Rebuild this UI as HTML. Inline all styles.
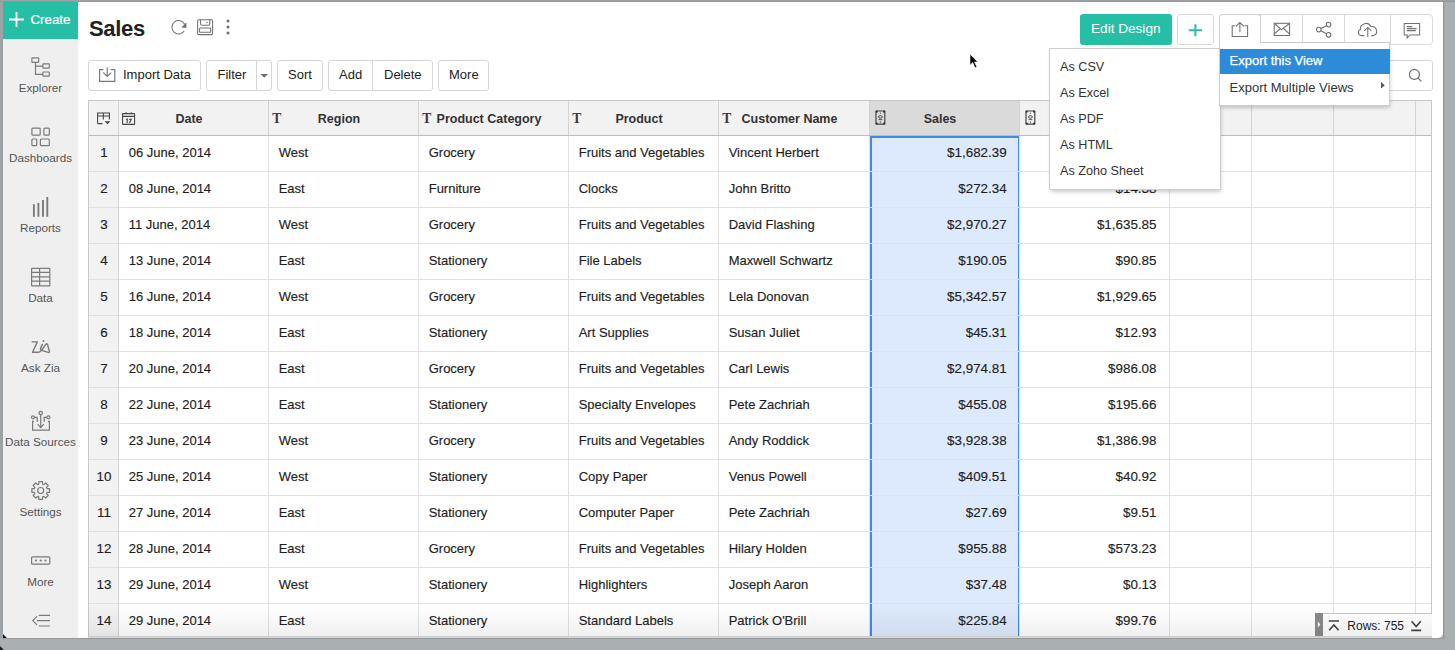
<!DOCTYPE html><html><head><meta charset="utf-8"><style>
*{box-sizing:border-box;margin:0;padding:0}
html,body{width:1455px;height:650px;overflow:hidden;background:#aab0b2;font-family:"Liberation Sans",sans-serif;color:#333}
#win{position:absolute;left:3px;top:2px;width:1440px;height:636px;background:#fff;border-radius:0 0 5px 5px;overflow:hidden}
#o{position:absolute;left:-3px;top:-2px;width:1455px;height:650px}
.a{position:absolute}
.t{position:absolute;white-space:nowrap;line-height:1}
svg{position:absolute;overflow:visible}
.side{left:3px;top:2px;width:75px;height:636px;background:#efefef}
.create{left:3px;top:2px;width:75px;height:37px;background:#26bfa6}
.sl{position:absolute;left:3px;width:75px;text-align:center;font-size:11.7px;color:#555;line-height:1}
.btn{position:absolute;top:60px;height:31px;border:1px solid #d6d6d6;border-radius:3px;background:#fff}
.bt{position:absolute;top:68px;font-size:13px;color:#222;white-space:nowrap;line-height:1}
.cell{position:absolute;font-size:13px;color:#1e1e1e;white-space:nowrap;line-height:1;-webkit-text-stroke:0.15px #1e1e1e}
.num{font-size:13.4px}
.hd{position:absolute;font-size:12.5px;font-weight:bold;color:#333;white-space:nowrap;line-height:1;text-align:center}
.mi{position:absolute;font-size:13px;color:#333;white-space:nowrap;line-height:1}
</style></head><body>
<div class="a" style="left:0;top:0;width:3px;height:638px;background:#9ea2a5"></div>
<div class="a" style="left:0;top:0;width:1455px;height:1px;background:#9ea2a5"></div>
<div class="a" style="left:0;top:1px;width:1455px;height:1px;background:#94979a"></div>
<div class="a" style="left:1443px;top:2px;width:1px;height:637px;background:#96999c"></div>
<div class="a" style="left:1444px;top:2px;width:1px;height:637px;background:#9ea2a4"></div>
<div class="a" style="left:3px;top:638px;width:1441px;height:1px;background:#95999b"></div>
<div id="win"><div id="o">
<div class="a side"></div>
<div class="a create"></div>
<svg width="1455" height="650" style="left:0;top:0"><path d="M16.5 12V27M9 19.5H24" stroke="#fff" stroke-width="1.8" fill="none"/></svg>
<div class="t" style="left:30.5px;top:12.8px;font-size:13.3px;color:#fff;-webkit-text-stroke:0.2px #fff">Create</div>
<svg width="1455" height="650" style="left:0;top:0" fill="none" stroke="#7a7a7a" stroke-width="1.2">
<!-- explorer -->
<rect x="31.9" y="57.9" width="6.8" height="4.4" rx="0.6"/>
<path d="M35.5 62.3V74.3H42.9M35.5 66.2H42.9"/>
<rect x="42.9" y="63.9" width="6.4" height="4.2" rx="0.6"/>
<rect x="42.9" y="72" width="6.4" height="4.2" rx="0.6"/>
<!-- dashboards -->
<rect x="31.9" y="128.1" width="8.3" height="7" rx="0.9"/>
<rect x="43.9" y="128.1" width="5.4" height="7" rx="0.9"/>
<rect x="31.9" y="139" width="4.8" height="6.6" rx="0.9"/>
<rect x="40.4" y="139" width="8.9" height="6.6" rx="0.9"/>
<!-- reports -->
<path d="M33.9 204.2V216.8M38.4 203.1V216.8M43 200.1V216.8M47.3 197.1V216.8" stroke-width="1.9"/>
<!-- data -->
<rect x="31.6" y="268.4" width="18.2" height="17.4" rx="0.4"/>
<path d="M31.6 272.4H49.8M31.6 276.8H49.8M31.6 281.2H49.8M39.6 268.4V285.8"/>
<!-- zia -->
<path d="M32.2 341.9H37.4L32.5 352.3H38.6Q40 352.3 40.6 351.2M42.4 344.4L40.5 348.6Q40.1 350 41.6 350.3L48.2 352.4Q49.8 352.8 49.4 351.2L47.6 344.8Q46.9 343 45.8 344.4L41.8 350" stroke-width="1.4" stroke-linejoin="round" stroke-linecap="round"/>
<circle cx="43.5" cy="340.9" r="1" fill="#7a7a7a" stroke="none"/>
<!-- data sources -->
<path d="M34 421.4H32.6V430.2H49.4V421.4H48"/>
<circle cx="40.7" cy="413" r="1.7"/>
<path d="M40.7 414.7V427.6M37.6 424.2L40.7 427.6L43.8 424.2"/>
<circle cx="33" cy="417.3" r="1.5"/>
<circle cx="48.4" cy="417.3" r="1.5"/>
<path d="M34.5 417.3H37.2V420.2M46.9 417.3H44.2V420.2"/>
<circle cx="37.2" cy="420.8" r="0.9" fill="#7a7a7a" stroke="none"/>
<circle cx="44.2" cy="420.8" r="0.9" fill="#7a7a7a" stroke="none"/>
<!-- settings gear -->
<path id="gear" d="M38.75 484.19 L38.91 481.68 L42.49 481.68 L42.65 484.19 L43.78 484.66 L45.67 483.00 L48.20 485.53 L46.54 487.42 L47.01 488.55 L49.52 488.71 L49.52 492.29 L47.01 492.45 L46.54 493.58 L48.20 495.47 L45.67 498.00 L43.78 496.34 L42.65 496.81 L42.49 499.32 L38.91 499.32 L38.75 496.81 L37.62 496.34 L35.73 498.00 L33.20 495.47 L34.86 493.58 L34.39 492.45 L31.88 492.29 L31.88 488.71 L34.39 488.55 L34.86 487.42 L33.20 485.53 L35.73 483.00 L37.62 484.66Z" stroke-linejoin="round"/>
<circle cx="40.7" cy="490.5" r="3"/>
<!-- more -->
<rect x="31.6" y="556.8" width="18.2" height="7.4" rx="1"/>
<circle cx="36" cy="560.5" r="1.1" fill="#7a7a7a" stroke="none"/>
<circle cx="40.7" cy="560.5" r="1.1" fill="#7a7a7a" stroke="none"/>
<circle cx="45.4" cy="560.5" r="1.1" fill="#7a7a7a" stroke="none"/>
<!-- collapse -->
<path d="M38.8 615.3H50M36.8 620.6H50M38.8 626H50M37 616.4L32.8 620.6L37 624.8"/>
</svg>
<div class="sl" style="top:82.15px">Explorer</div>
<div class="sl" style="top:152.15px">Dashboards</div>
<div class="sl" style="top:222.15px">Reports</div>
<div class="sl" style="top:292.15px">Data</div>
<div class="sl" style="top:362.15px">Ask Zia</div>
<div class="sl" style="top:436.15px">Data Sources</div>
<div class="sl" style="top:506.15px">Settings</div>
<div class="sl" style="top:576.15px">More</div>
<div class="t" style="left:89px;top:18px;font-size:22px;font-weight:bold;color:#222;letter-spacing:-0.3px">Sales</div>
<svg width="1455" height="650" style="left:0;top:0" fill="none" stroke="#707070" stroke-width="1.05">
<path d="M184.6 24.2A6.7 6.7 0 1 0 184.2 31"/>
<path d="M182 27.3L186 23L186.2 27.6Z" fill="#6e6e6e" stroke-width="0.6"/>
<rect x="197.6" y="19.8" width="15" height="14.8" rx="1.2"/>
<path d="M200.6 19.8V24Q200.6 25.3 201.9 25.3H208.5Q209.8 25.3 209.8 24V19.8"/>
<rect x="199.4" y="28" width="11.4" height="4.2" rx="1"/>
<circle cx="207" cy="22.5" r="0.7" fill="#6e6e6e" stroke="none"/>
<circle cx="228" cy="21" r="1.5" fill="#6e6e6e" stroke="none"/>
<circle cx="228" cy="27" r="1.5" fill="#6e6e6e" stroke="none"/>
<circle cx="228" cy="33" r="1.5" fill="#6e6e6e" stroke="none"/>
</svg>
<div class="a" style="left:1080px;top:14px;width:92px;height:31px;background:#26bfa6;border-radius:3px"></div>
<div class="t" style="left:1091px;top:21.5px;font-size:13.6px;color:#fff">Edit Design</div>
<div class="a" style="left:1177px;top:14px;width:37px;height:31px;border:1px solid #d9d9d9;border-radius:3px;background:#fff"></div>
<svg width="1455" height="650" style="left:0;top:0"><path d="M1195.4 24.2V36.2M1188.8 30.2H1202" stroke="#26bfa6" stroke-width="2" fill="none"/></svg>
<div class="a" style="left:1219px;top:14px;width:214px;height:31px;border:1px solid #d9d9d9;border-radius:4px;background:#fff"></div>
<div class="a" style="left:1260px;top:14px;width:1px;height:30px;background:#d9d9d9"></div>
<div class="a" style="left:1302px;top:14px;width:1px;height:30px;background:#d9d9d9"></div>
<div class="a" style="left:1344px;top:14px;width:1px;height:30px;background:#d9d9d9"></div>
<div class="a" style="left:1390px;top:14px;width:1px;height:30px;background:#d9d9d9"></div>
<div class="a" style="left:1219px;top:14px;width:42px;height:31px;border:1px solid #d0d0d0;border-bottom:none;border-radius:4px 4px 0 0;background:#fff"></div>
<svg width="1455" height="650" style="left:0;top:0" fill="none" stroke="#707070" stroke-width="1.05">
<path d="M1235.3 25.8H1232.2V36.4H1247.6V25.8H1244.5"/>
<path d="M1239.9 22.5V32.3M1236 26.3L1239.9 22.4L1243.8 26.3"/>
<rect x="1274.2" y="23.3" width="15.4" height="12.2"/>
<path d="M1274.4 23.5L1281.5 29.6L1289.4 23.5M1274.4 33.9L1280.3 28.5M1289.4 33.9L1283.6 28.5"/>
<circle cx="1318.8" cy="29.6" r="2.3"/>
<circle cx="1328.6" cy="24.6" r="2.3"/>
<circle cx="1328.6" cy="34.8" r="2.3"/>
<path d="M1320.9 28.5L1326.5 25.7M1320.9 30.7L1326.5 33.7"/>
<path d="M1364.4 35.6H1361.4A3.1 3.1 0 0 1 1360.4 29.6A5.6 5.6 0 0 1 1371 26.6A4.7 4.7 0 0 1 1373.6 35.6H1371.2"/>
<path d="M1367.8 27.5V37M1364.2 31L1367.8 27.4L1371.4 31"/>
<path d="M1404.2 23.4H1419.6V35H1410L1407.2 38V35H1404.2Z"/>
<path d="M1406.8 26.6H1412.2M1406.8 28.6H1416.6M1406.8 30.6H1415.8"/>
</svg>
<div class="btn" style="left:88px;width:113px"></div>
<svg width="1455" height="650" style="left:0;top:0" fill="none" stroke="#7a7a7a" stroke-width="1.2">
<path d="M103.4 69.6H99.6V81.4H114.8V69.6H110.8M107.2 67.4V76.2M103.2 72.6L107.2 76.4L111.2 72.6"/>
</svg>
<div class="bt" style="left:123px">Import Data</div>
<div class="btn" style="left:206px;width:66px"></div>
<div class="a" style="left:255.5px;top:61px;width:1px;height:29px;background:#d6d6d6"></div>
<div class="bt" style="left:217.5px">Filter</div>
<svg width="1455" height="650" style="left:0;top:0"><path d="M260.4 74L268 74L264.2 77.8Z" fill="#6e6e6e"/></svg>
<div class="btn" style="left:277px;width:46px"></div>
<div class="bt" style="left:288px">Sort</div>
<div class="btn" style="left:328px;width:104.5px"></div>
<div class="a" style="left:372px;top:61px;width:1px;height:29px;background:#d6d6d6"></div>
<div class="bt" style="left:339px">Add</div>
<div class="bt" style="left:384px">Delete</div>
<div class="btn" style="left:438px;width:50.5px"></div>
<div class="bt" style="left:449px">More</div>
<div class="btn" style="left:1380px;top:60px;width:53px;height:31px"></div>
<svg width="1455" height="650" style="left:0;top:0" fill="none" stroke="#6e6e6e" stroke-width="1.2"><circle cx="1414.4" cy="74.4" r="5"/><path d="M1418 78L1421.4 81.4"/></svg>
<div class="a" style="left:88px;top:100px;width:1344px;height:536px;border:1px solid #c8c8c8;border-bottom:none;background:#fff"></div>
<div class="a" style="left:89px;top:101px;width:1342px;height:34px;background:#f2f2f2"></div>
<div class="a" style="left:869px;top:101px;width:150px;height:34px;background:#dadada"></div>
<div class="a" style="left:89px;top:135px;width:29px;height:501px;background:#f2f2f2"></div>
<div class="a" style="left:870px;top:136px;width:150px;height:500px;background:#dde9fc;border:2px solid #418ae6;border-bottom:none"></div>
<div class="a" style="left:89px;top:171px;width:1342px;height:1px;background:#e2e2e2"></div>
<div class="a" style="left:89px;top:207px;width:1342px;height:1px;background:#e2e2e2"></div>
<div class="a" style="left:89px;top:243px;width:1342px;height:1px;background:#e2e2e2"></div>
<div class="a" style="left:89px;top:279px;width:1342px;height:1px;background:#e2e2e2"></div>
<div class="a" style="left:89px;top:315px;width:1342px;height:1px;background:#e2e2e2"></div>
<div class="a" style="left:89px;top:351px;width:1342px;height:1px;background:#e2e2e2"></div>
<div class="a" style="left:89px;top:387px;width:1342px;height:1px;background:#e2e2e2"></div>
<div class="a" style="left:89px;top:423px;width:1342px;height:1px;background:#e2e2e2"></div>
<div class="a" style="left:89px;top:459px;width:1342px;height:1px;background:#e2e2e2"></div>
<div class="a" style="left:89px;top:495px;width:1342px;height:1px;background:#e2e2e2"></div>
<div class="a" style="left:89px;top:531px;width:1342px;height:1px;background:#e2e2e2"></div>
<div class="a" style="left:89px;top:567px;width:1342px;height:1px;background:#e2e2e2"></div>
<div class="a" style="left:89px;top:603px;width:1342px;height:1px;background:#e2e2e2"></div>
<div class="a" style="left:89px;top:639px;width:1342px;height:1px;background:#e2e2e2"></div>
<div class="a" style="left:89px;top:135px;width:1342px;height:1px;background:#bdbdbd"></div>
<div class="a" style="left:118px;top:101px;width:1px;height:34px;background:#d4d4d4"></div>
<div class="a" style="left:118px;top:136px;width:1px;height:500px;background:#e2e2e2"></div>
<div class="a" style="left:268px;top:101px;width:1px;height:34px;background:#d4d4d4"></div>
<div class="a" style="left:268px;top:136px;width:1px;height:500px;background:#e2e2e2"></div>
<div class="a" style="left:418px;top:101px;width:1px;height:34px;background:#d4d4d4"></div>
<div class="a" style="left:418px;top:136px;width:1px;height:500px;background:#e2e2e2"></div>
<div class="a" style="left:568px;top:101px;width:1px;height:34px;background:#d4d4d4"></div>
<div class="a" style="left:568px;top:136px;width:1px;height:500px;background:#e2e2e2"></div>
<div class="a" style="left:718px;top:101px;width:1px;height:34px;background:#d4d4d4"></div>
<div class="a" style="left:718px;top:136px;width:1px;height:500px;background:#e2e2e2"></div>
<div class="a" style="left:869px;top:101px;width:1px;height:34px;background:#d4d4d4"></div>
<div class="a" style="left:869px;top:136px;width:1px;height:500px;background:#e2e2e2"></div>
<div class="a" style="left:1019px;top:101px;width:1px;height:34px;background:#d4d4d4"></div>
<div class="a" style="left:1019px;top:136px;width:1px;height:500px;background:#e2e2e2"></div>
<div class="a" style="left:1169px;top:101px;width:1px;height:34px;background:#d4d4d4"></div>
<div class="a" style="left:1169px;top:136px;width:1px;height:500px;background:#e2e2e2"></div>
<div class="a" style="left:1251px;top:101px;width:1px;height:34px;background:#d4d4d4"></div>
<div class="a" style="left:1251px;top:136px;width:1px;height:500px;background:#e2e2e2"></div>
<div class="a" style="left:1333px;top:101px;width:1px;height:34px;background:#d4d4d4"></div>
<div class="a" style="left:1333px;top:136px;width:1px;height:500px;background:#e2e2e2"></div>
<div class="a" style="left:1415px;top:101px;width:1px;height:34px;background:#d4d4d4"></div>
<div class="a" style="left:1415px;top:136px;width:1px;height:500px;background:#e2e2e2"></div>
<div class="a" style="left:118px;top:136px;width:1px;height:500px;background:#d4d4d4"></div>
<div class="hd" style="left:109.0px;width:160px;top:112.8px">Date</div>
<div class="hd" style="left:259.0px;width:160px;top:112.8px">Region</div>
<div class="hd" style="left:409.0px;width:160px;top:112.8px">Product Category</div>
<div class="hd" style="left:559.0px;width:160px;top:112.8px">Product</div>
<div class="hd" style="left:709.5px;width:160px;top:112.8px">Customer Name</div>
<div class="hd" style="left:860.0px;width:160px;top:112.8px">Sales</div>
<svg width="1455" height="650" style="left:0;top:0" fill="none" stroke="#444" stroke-width="1.1"><path d="M97.6 123.6V113H109.4V119.5M97.6 116H109.4M103.3 113V119.5M97.6 123.6H102.5" /><path d="M104.6 121.2H110.4L107.5 124.2Z" fill="#444" stroke="none"/><rect x="122.6" y="113.6" width="12" height="10.8" rx="0.4"/><path d="M122.6 116.4H134.6M126 112.2V114M131.2 112.2V114"/><path d="M126.2 119.8L127.2 119.1V122.9M128.9 119.3H131.3L129.4 122.9" stroke-width="1.1"/><text x="272.3" y="123" font-size="13.6" font-weight="bold" fill="#3a3a3a" stroke="none" font-family="Liberation Serif">T</text><text x="422.3" y="123" font-size="13.6" font-weight="bold" fill="#3a3a3a" stroke="none" font-family="Liberation Serif">T</text><text x="572.3" y="123" font-size="13.6" font-weight="bold" fill="#3a3a3a" stroke="none" font-family="Liberation Serif">T</text><text x="722.3" y="123" font-size="13.6" font-weight="bold" fill="#3a3a3a" stroke="none" font-family="Liberation Serif">T</text><rect x="876" y="111" width="8.8" height="13.2" rx="0.5" stroke-width="1.2"/><circle cx="876.7" cy="111.7" r="1.1" fill="#333" stroke="none"/><circle cx="884.1" cy="111.7" r="1.1" fill="#333" stroke="none"/><circle cx="876.7" cy="123.5" r="1.1" fill="#333" stroke="none"/><circle cx="884.1" cy="123.5" r="1.1" fill="#333" stroke="none"/><ellipse cx="880.4" cy="116.9" rx="1.9" ry="1.3" stroke-width="0.9"/><path d="M880.4 112.6V113.8M880.4 121.4V122.8M878.6 119.6H882.2" stroke-width="0.9"/><rect x="1026" y="111" width="8.8" height="13.2" rx="0.5" stroke-width="1.2"/><circle cx="1026.7" cy="111.7" r="1.1" fill="#333" stroke="none"/><circle cx="1034.1" cy="111.7" r="1.1" fill="#333" stroke="none"/><circle cx="1026.7" cy="123.5" r="1.1" fill="#333" stroke="none"/><circle cx="1034.1" cy="123.5" r="1.1" fill="#333" stroke="none"/><ellipse cx="1030.4" cy="116.9" rx="1.9" ry="1.3" stroke-width="0.9"/><path d="M1030.4 112.6V113.8M1030.4 121.4V122.8M1028.6 119.6H1032.2" stroke-width="0.9"/></svg>
<div class="cell num" style="left:89px;width:30px;text-align:center;top:145.7px">1</div>
<div class="cell" style="left:128.7px;top:145.5px">06 June, 2014</div>
<div class="cell" style="left:278.7px;top:145.5px">West</div>
<div class="cell" style="left:428.7px;top:145.5px">Grocery</div>
<div class="cell" style="left:578.7px;top:145.5px">Fruits and Vegetables</div>
<div class="cell" style="left:728.7px;top:145.5px">Vincent Herbert</div>
<div class="cell num" style="left:869px;width:137.7px;text-align:right;top:145.9px">$1,682.39</div>
<div class="cell num" style="left:89px;width:30px;text-align:center;top:181.7px">2</div>
<div class="cell" style="left:128.7px;top:181.5px">08 June, 2014</div>
<div class="cell" style="left:278.7px;top:181.5px">East</div>
<div class="cell" style="left:428.7px;top:181.5px">Furniture</div>
<div class="cell" style="left:578.7px;top:181.5px">Clocks</div>
<div class="cell" style="left:728.7px;top:181.5px">John Britto</div>
<div class="cell num" style="left:869px;width:137.7px;text-align:right;top:181.9px">$272.34</div>
<div class="cell num" style="left:1019px;width:137.5px;text-align:right;top:181.9px">$14.38</div>
<div class="cell num" style="left:89px;width:30px;text-align:center;top:217.7px">3</div>
<div class="cell" style="left:128.7px;top:217.5px">11 June, 2014</div>
<div class="cell" style="left:278.7px;top:217.5px">West</div>
<div class="cell" style="left:428.7px;top:217.5px">Grocery</div>
<div class="cell" style="left:578.7px;top:217.5px">Fruits and Vegetables</div>
<div class="cell" style="left:728.7px;top:217.5px">David Flashing</div>
<div class="cell num" style="left:869px;width:137.7px;text-align:right;top:217.9px">$2,970.27</div>
<div class="cell num" style="left:1019px;width:137.5px;text-align:right;top:217.9px">$1,635.85</div>
<div class="cell num" style="left:89px;width:30px;text-align:center;top:253.7px">4</div>
<div class="cell" style="left:128.7px;top:253.5px">13 June, 2014</div>
<div class="cell" style="left:278.7px;top:253.5px">East</div>
<div class="cell" style="left:428.7px;top:253.5px">Stationery</div>
<div class="cell" style="left:578.7px;top:253.5px">File Labels</div>
<div class="cell" style="left:728.7px;top:253.5px">Maxwell Schwartz</div>
<div class="cell num" style="left:869px;width:137.7px;text-align:right;top:253.9px">$190.05</div>
<div class="cell num" style="left:1019px;width:137.5px;text-align:right;top:253.9px">$90.85</div>
<div class="cell num" style="left:89px;width:30px;text-align:center;top:289.7px">5</div>
<div class="cell" style="left:128.7px;top:289.5px">16 June, 2014</div>
<div class="cell" style="left:278.7px;top:289.5px">West</div>
<div class="cell" style="left:428.7px;top:289.5px">Grocery</div>
<div class="cell" style="left:578.7px;top:289.5px">Fruits and Vegetables</div>
<div class="cell" style="left:728.7px;top:289.5px">Lela Donovan</div>
<div class="cell num" style="left:869px;width:137.7px;text-align:right;top:289.9px">$5,342.57</div>
<div class="cell num" style="left:1019px;width:137.5px;text-align:right;top:289.9px">$1,929.65</div>
<div class="cell num" style="left:89px;width:30px;text-align:center;top:325.7px">6</div>
<div class="cell" style="left:128.7px;top:325.5px">18 June, 2014</div>
<div class="cell" style="left:278.7px;top:325.5px">East</div>
<div class="cell" style="left:428.7px;top:325.5px">Stationery</div>
<div class="cell" style="left:578.7px;top:325.5px">Art Supplies</div>
<div class="cell" style="left:728.7px;top:325.5px">Susan Juliet</div>
<div class="cell num" style="left:869px;width:137.7px;text-align:right;top:325.9px">$45.31</div>
<div class="cell num" style="left:1019px;width:137.5px;text-align:right;top:325.9px">$12.93</div>
<div class="cell num" style="left:89px;width:30px;text-align:center;top:361.7px">7</div>
<div class="cell" style="left:128.7px;top:361.5px">20 June, 2014</div>
<div class="cell" style="left:278.7px;top:361.5px">East</div>
<div class="cell" style="left:428.7px;top:361.5px">Grocery</div>
<div class="cell" style="left:578.7px;top:361.5px">Fruits and Vegetables</div>
<div class="cell" style="left:728.7px;top:361.5px">Carl Lewis</div>
<div class="cell num" style="left:869px;width:137.7px;text-align:right;top:361.9px">$2,974.81</div>
<div class="cell num" style="left:1019px;width:137.5px;text-align:right;top:361.9px">$986.08</div>
<div class="cell num" style="left:89px;width:30px;text-align:center;top:397.7px">8</div>
<div class="cell" style="left:128.7px;top:397.5px">22 June, 2014</div>
<div class="cell" style="left:278.7px;top:397.5px">East</div>
<div class="cell" style="left:428.7px;top:397.5px">Stationery</div>
<div class="cell" style="left:578.7px;top:397.5px">Specialty Envelopes</div>
<div class="cell" style="left:728.7px;top:397.5px">Pete Zachriah</div>
<div class="cell num" style="left:869px;width:137.7px;text-align:right;top:397.9px">$455.08</div>
<div class="cell num" style="left:1019px;width:137.5px;text-align:right;top:397.9px">$195.66</div>
<div class="cell num" style="left:89px;width:30px;text-align:center;top:433.7px">9</div>
<div class="cell" style="left:128.7px;top:433.5px">23 June, 2014</div>
<div class="cell" style="left:278.7px;top:433.5px">West</div>
<div class="cell" style="left:428.7px;top:433.5px">Grocery</div>
<div class="cell" style="left:578.7px;top:433.5px">Fruits and Vegetables</div>
<div class="cell" style="left:728.7px;top:433.5px">Andy Roddick</div>
<div class="cell num" style="left:869px;width:137.7px;text-align:right;top:433.9px">$3,928.38</div>
<div class="cell num" style="left:1019px;width:137.5px;text-align:right;top:433.9px">$1,386.98</div>
<div class="cell num" style="left:89px;width:30px;text-align:center;top:469.7px">10</div>
<div class="cell" style="left:128.7px;top:469.5px">25 June, 2014</div>
<div class="cell" style="left:278.7px;top:469.5px">West</div>
<div class="cell" style="left:428.7px;top:469.5px">Stationery</div>
<div class="cell" style="left:578.7px;top:469.5px">Copy Paper</div>
<div class="cell" style="left:728.7px;top:469.5px">Venus Powell</div>
<div class="cell num" style="left:869px;width:137.7px;text-align:right;top:469.9px">$409.51</div>
<div class="cell num" style="left:1019px;width:137.5px;text-align:right;top:469.9px">$40.92</div>
<div class="cell num" style="left:89px;width:30px;text-align:center;top:505.7px">11</div>
<div class="cell" style="left:128.7px;top:505.5px">27 June, 2014</div>
<div class="cell" style="left:278.7px;top:505.5px">East</div>
<div class="cell" style="left:428.7px;top:505.5px">Stationery</div>
<div class="cell" style="left:578.7px;top:505.5px">Computer Paper</div>
<div class="cell" style="left:728.7px;top:505.5px">Pete Zachriah</div>
<div class="cell num" style="left:869px;width:137.7px;text-align:right;top:505.9px">$27.69</div>
<div class="cell num" style="left:1019px;width:137.5px;text-align:right;top:505.9px">$9.51</div>
<div class="cell num" style="left:89px;width:30px;text-align:center;top:541.7px">12</div>
<div class="cell" style="left:128.7px;top:541.5px">28 June, 2014</div>
<div class="cell" style="left:278.7px;top:541.5px">East</div>
<div class="cell" style="left:428.7px;top:541.5px">Grocery</div>
<div class="cell" style="left:578.7px;top:541.5px">Fruits and Vegetables</div>
<div class="cell" style="left:728.7px;top:541.5px">Hilary Holden</div>
<div class="cell num" style="left:869px;width:137.7px;text-align:right;top:541.9px">$955.88</div>
<div class="cell num" style="left:1019px;width:137.5px;text-align:right;top:541.9px">$573.23</div>
<div class="cell num" style="left:89px;width:30px;text-align:center;top:577.7px">13</div>
<div class="cell" style="left:128.7px;top:577.5px">29 June, 2014</div>
<div class="cell" style="left:278.7px;top:577.5px">West</div>
<div class="cell" style="left:428.7px;top:577.5px">Stationery</div>
<div class="cell" style="left:578.7px;top:577.5px">Highlighters</div>
<div class="cell" style="left:728.7px;top:577.5px">Joseph Aaron</div>
<div class="cell num" style="left:869px;width:137.7px;text-align:right;top:577.9px">$37.48</div>
<div class="cell num" style="left:1019px;width:137.5px;text-align:right;top:577.9px">$0.13</div>
<div class="cell num" style="left:89px;width:30px;text-align:center;top:613.7px">14</div>
<div class="cell" style="left:128.7px;top:613.5px">29 June, 2014</div>
<div class="cell" style="left:278.7px;top:613.5px">East</div>
<div class="cell" style="left:428.7px;top:613.5px">Stationery</div>
<div class="cell" style="left:578.7px;top:613.5px">Standard Labels</div>
<div class="cell" style="left:728.7px;top:613.5px">Patrick O'Brill</div>
<div class="cell num" style="left:869px;width:137.7px;text-align:right;top:613.9px">$225.84</div>
<div class="cell num" style="left:1019px;width:137.5px;text-align:right;top:613.9px">$99.76</div>
<div class="a" style="left:88px;top:636px;width:1344px;height:1px;background:#cacaca"></div>
<div class="a" style="left:88px;top:637px;width:1344px;height:1px;background:#d8d8d8"></div>
<div class="a" style="left:1315px;top:613px;width:8px;height:23px;background:#8a8a8a"></div>
<svg width="1455" height="650" style="left:0;top:0"><path d="M1317.8 621.5L1320.4 624.5L1317.8 627.5Z" fill="#fff"/></svg>
<div class="a" style="left:1323px;top:613px;width:109px;height:23px;background:#fff;border-top:1px solid #c8c8c8"></div>
<svg width="1455" height="650" style="left:0;top:0" fill="none" stroke="#444" stroke-width="1.6">
<path d="M1328.8 621H1339M1329.2 630.2L1333.9 625L1338.6 630.2"/>
<path d="M1411.2 630.4H1421.2M1411.6 621.2L1416.2 626.6L1420.8 621.2"/>
</svg>
<div class="a" style="left:88px;top:606px;width:1344px;height:30px;background:linear-gradient(rgba(0,0,0,0),rgba(0,0,0,0.06))"></div>
<div class="t" style="left:1347.3px;top:620px;font-size:12px;color:#222">Rows: 755</div>
<div class="a" style="left:1049px;top:48px;width:172px;height:142px;background:#fff;border:1px solid #cdcdcd;box-shadow:1px 3px 4px -1px rgba(0,0,0,0.2)"></div>
<div class="mi" style="left:1060px;top:61px;font-size:12.65px">As CSV</div>
<div class="mi" style="left:1060px;top:87px;font-size:12.65px">As Excel</div>
<div class="mi" style="left:1060px;top:113px;font-size:12.65px">As PDF</div>
<div class="mi" style="left:1060px;top:139px;font-size:12.65px">As HTML</div>
<div class="mi" style="left:1060px;top:165px;font-size:12.65px">As Zoho Sheet</div>
<div class="a" style="left:1219px;top:42px;width:171px;height:64px;background:#fff;border:1px solid #cdcdcd;border-top:none;box-shadow:1px 3px 4px -1px rgba(0,0,0,0.2)"></div>
<div class="a" style="left:1260px;top:42px;width:130px;height:1px;background:#cdcdcd"></div>
<div class="a" style="left:1220px;top:48.5px;width:170px;height:25.5px;background:#2d8cd9"></div>
<div class="mi" style="left:1229.5px;top:54.3px;color:#fff;-webkit-text-stroke:0.25px #fff">Export this View</div>
<div class="mi" style="left:1229.5px;top:80.5px">Export Multiple Views</div>
<svg width="1455" height="650" style="left:0;top:0"><path d="M1381 82L1384.8 85.2L1381 88.5Z" fill="#555"/></svg>
<svg width="1455" height="650" style="left:0;top:0"><path d="M970 54.2V65.2L972.7 62.6L975 67.8L976.9 67L974.6 62H977.8Z" fill="#000" stroke="#fff" stroke-width="0.6"/></svg>
</div></div>
<svg width="1455" height="650" style="left:0;top:0"><path d="M3 634L6.8 638H3Z" fill="#111"/><path d="M0 646L4 650H0Z" fill="#222"/></svg>
</body></html>
